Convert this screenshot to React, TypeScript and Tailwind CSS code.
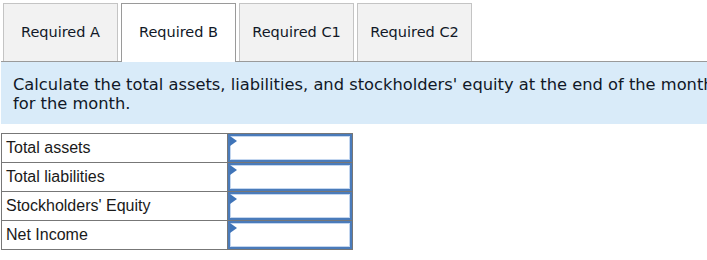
const tabs = ["Required A", "Required B", "Required C1", "Required C2"];
const rows = ["Total assets", "Total liabilities", "Stockholders' Equity", "Net Income"];

export default function App() {
  return (
    <div className="w-[707px] h-[260px] overflow-hidden bg-white">
      <div className="flex items-end gap-[3px] pl-[3px] pt-[3px]">
        {tabs.map((t, i) => {
          const active = i === 1;
          return (
            <div
              key={t}
              className={
                active
                  ? "relative z-10 -mb-px flex h-[59px] w-[115px] items-center justify-center border border-b-0 border-[#9a9a9a] bg-white text-[14.5px] text-[#111827] font-['DejaVu_Sans',Verdana,sans-serif]"
                  : "flex h-[58px] w-[115px] items-center justify-center border border-b-0 border-[#c4c4c4] bg-[#f2f2f2] text-[14.5px] text-[#111827] font-['DejaVu_Sans',Verdana,sans-serif]"
              }
            >
              {t}
            </div>
          );
        })}
      </div>
      <div className="ml-px w-[900px] border-t border-[#9a9a9a] bg-[#d9ebf9] pl-[12px] pt-[13px] pb-[11px] text-[16.3px] leading-[19px] text-[#111827] font-['DejaVu_Sans',Verdana,sans-serif]">
        <p className="whitespace-nowrap">Calculate the total assets, liabilities, and stockholders' equity at the end of the month and net income</p>
        <p className="whitespace-nowrap">for the month.</p>
      </div>
      <table className="mt-[9px] ml-[1px] border-collapse font-['Liberation_Sans',Arial,sans-serif] text-[16px] text-[#1a1a1a]">
        <tbody>
          {rows.map((r) => (
            <tr key={r} className="h-[29px]">
              <td className="w-[226px] border border-[#777] px-[4px] align-middle leading-[20px]">{r}</td>
              <td className="w-[125px] border border-[#777] p-0">
                <div className="relative h-[28px] border-2 border-[#4a7bba]">
                  <div className="h-full w-full border border-[#c3d6ef]" />
                  <span className="absolute left-0 top-0 h-0 w-0 border-y-[5px] border-l-[7px] border-y-transparent border-l-[#3f74b8]" />
                </div>
              </td>
            </tr>
          ))}
        </tbody>
      </table>
    </div>
  );
}
